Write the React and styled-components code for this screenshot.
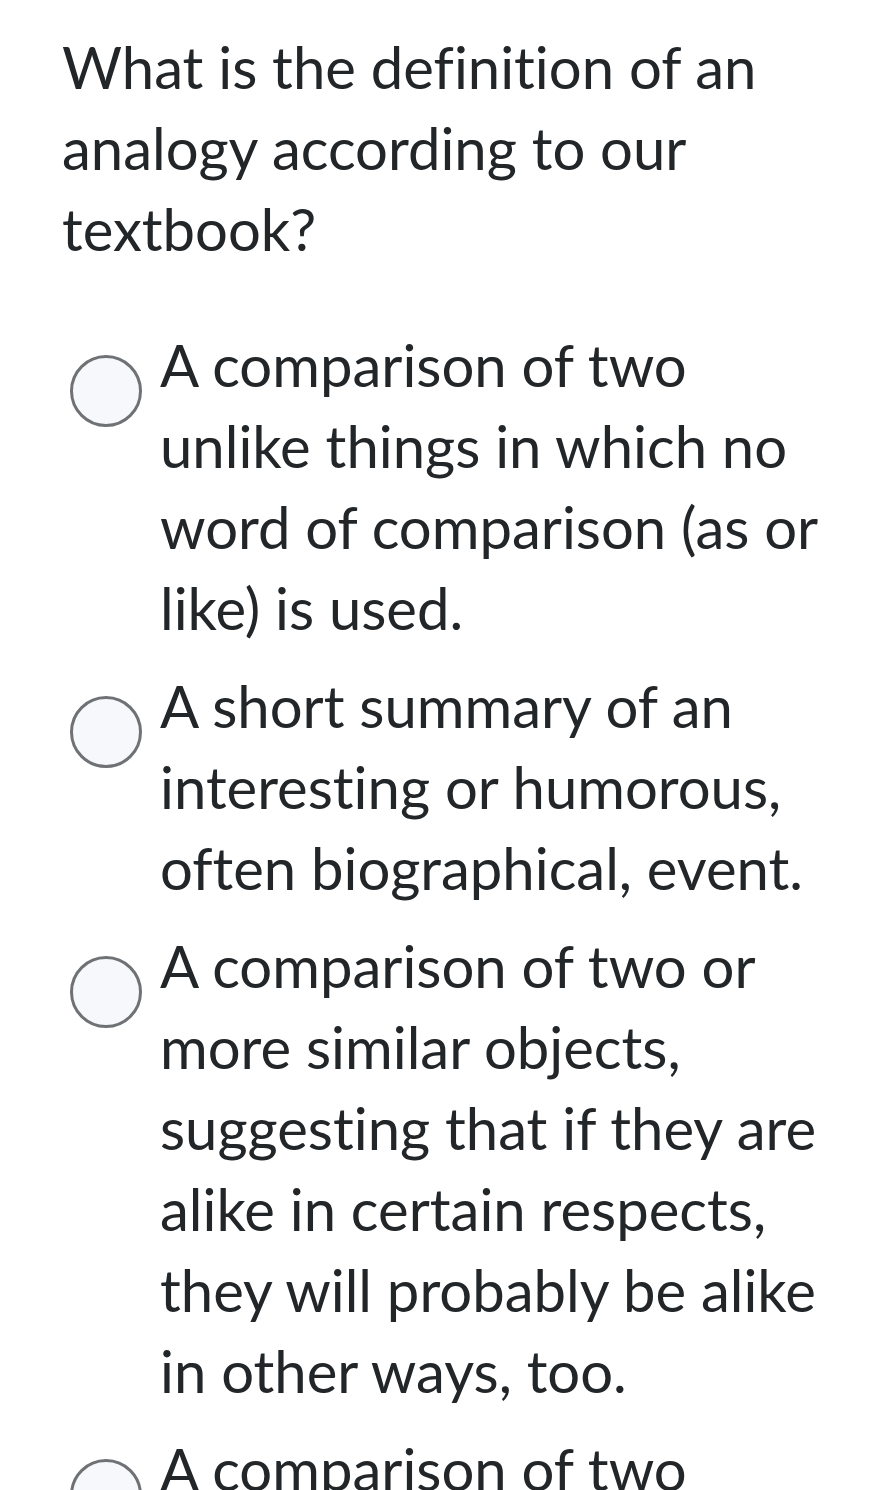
import React from 'react';
import styled, { createGlobalStyle } from 'styled-components';

const GlobalStyle = createGlobalStyle`
  html, body {
    margin: 0;
    padding: 0;
    background: #ffffff;
  }
  body {
    font-family: Lato, "Open Sans", sans-serif;
    font-variant-ligatures: none;
    color: #222629;
  }
`;

const Page = styled.div`
  padding: 26px 40px 0 62px;
  width: 872px;
  box-sizing: border-box;
  height: 1490px;
  overflow: hidden;
`;

const Question = styled.h1`
  margin: 0 0 55px 0;
  font-size: 58px;
  font-weight: 400;
  line-height: 81px;
`;

const OptionList = styled.div`
  display: flex;
  flex-direction: column;
  gap: 17px;
`;

const Option = styled.label`
  display: flex;
  align-items: flex-start;
  gap: 18px;
  cursor: pointer;
`;

const Radio = styled.span`
  flex: none;
  width: 66px;
  height: 66px;
  margin: 31px 0 0 8px;
  border-radius: 50%;
  border: 3px solid #6f7275;
  background: #f6f8fc;
`;

const OptionText = styled.span`
  font-size: 58px;
  line-height: 81px;
`;

const options = [
  'A comparison of two unlike things in which no word of comparison (as or like) is used.',
  'A short summary of an interesting or humorous, often biographical, event.',
  'A comparison of two or more similar objects, suggesting that if they are alike in certain respects, they will probably be alike in other ways, too.',
  'A comparison of two unlike things using the word like or as.',
];

export default function App() {
  return (
    <Page>
      <GlobalStyle />
      <Question>What is the definition of an analogy according to our textbook?</Question>
      <OptionList>
        {options.map((text) => (
          <Option key={text}>
            <Radio />
            <OptionText>{text}</OptionText>
          </Option>
        ))}
      </OptionList>
    </Page>
  );
}
